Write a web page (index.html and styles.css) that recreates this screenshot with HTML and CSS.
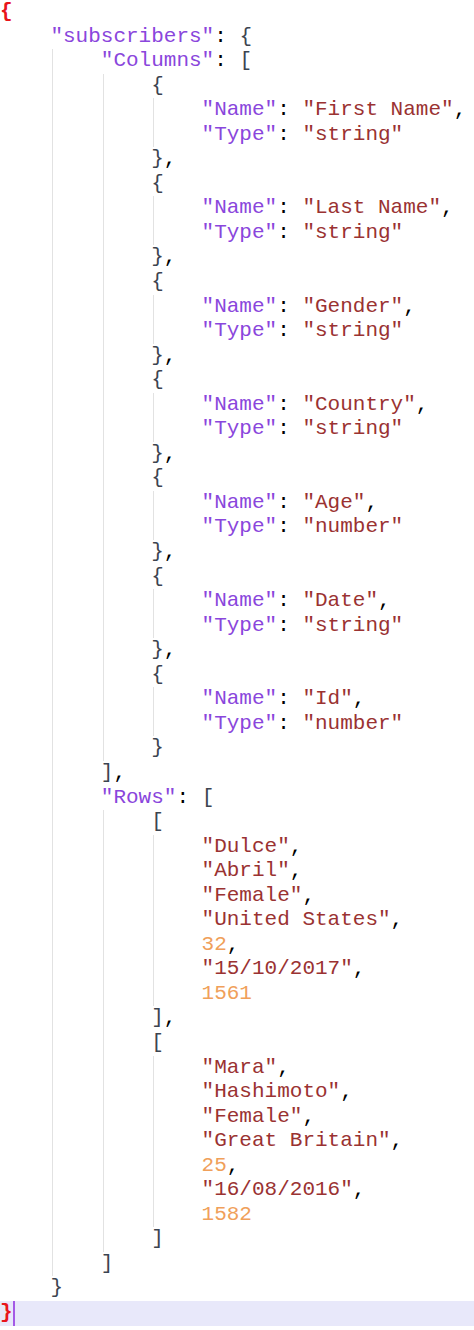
FILE: index.html
```html
<!DOCTYPE html>
<html>
<head>
<meta charset="utf-8">
<link rel="stylesheet" href="styles.css">
</head>
<body>
<div class="editor">
<div class="ln"><span class="t r">{</span></div>
<div class="ln"><span class="i"></span><span class="t"><span class="k">"subscribers"</span>: <span class="p">{</span></span></div>
<div class="ln"><span class="i"></span><span class="i g"></span><span class="t"><span class="k">"Columns"</span>: <span class="p">[</span></span></div>
<div class="ln"><span class="i"></span><span class="i g"></span><span class="i g"></span><span class="t"><span class="p">{</span></span></div>
<div class="ln"><span class="i"></span><span class="i g"></span><span class="i g"></span><span class="i g"></span><span class="t"><span class="k">"Name"</span>: <span class="s">"First Name"</span>,</span></div>
<div class="ln"><span class="i"></span><span class="i g"></span><span class="i g"></span><span class="i g"></span><span class="t"><span class="k">"Type"</span>: <span class="s">"string"</span></span></div>
<div class="ln"><span class="i"></span><span class="i g"></span><span class="i g"></span><span class="t"><span class="p">}</span>,</span></div>
<div class="ln"><span class="i"></span><span class="i g"></span><span class="i g"></span><span class="t"><span class="p">{</span></span></div>
<div class="ln"><span class="i"></span><span class="i g"></span><span class="i g"></span><span class="i g"></span><span class="t"><span class="k">"Name"</span>: <span class="s">"Last Name"</span>,</span></div>
<div class="ln"><span class="i"></span><span class="i g"></span><span class="i g"></span><span class="i g"></span><span class="t"><span class="k">"Type"</span>: <span class="s">"string"</span></span></div>
<div class="ln"><span class="i"></span><span class="i g"></span><span class="i g"></span><span class="t"><span class="p">}</span>,</span></div>
<div class="ln"><span class="i"></span><span class="i g"></span><span class="i g"></span><span class="t"><span class="p">{</span></span></div>
<div class="ln"><span class="i"></span><span class="i g"></span><span class="i g"></span><span class="i g"></span><span class="t"><span class="k">"Name"</span>: <span class="s">"Gender"</span>,</span></div>
<div class="ln"><span class="i"></span><span class="i g"></span><span class="i g"></span><span class="i g"></span><span class="t"><span class="k">"Type"</span>: <span class="s">"string"</span></span></div>
<div class="ln"><span class="i"></span><span class="i g"></span><span class="i g"></span><span class="t"><span class="p">}</span>,</span></div>
<div class="ln"><span class="i"></span><span class="i g"></span><span class="i g"></span><span class="t"><span class="p">{</span></span></div>
<div class="ln"><span class="i"></span><span class="i g"></span><span class="i g"></span><span class="i g"></span><span class="t"><span class="k">"Name"</span>: <span class="s">"Country"</span>,</span></div>
<div class="ln"><span class="i"></span><span class="i g"></span><span class="i g"></span><span class="i g"></span><span class="t"><span class="k">"Type"</span>: <span class="s">"string"</span></span></div>
<div class="ln"><span class="i"></span><span class="i g"></span><span class="i g"></span><span class="t"><span class="p">}</span>,</span></div>
<div class="ln"><span class="i"></span><span class="i g"></span><span class="i g"></span><span class="t"><span class="p">{</span></span></div>
<div class="ln"><span class="i"></span><span class="i g"></span><span class="i g"></span><span class="i g"></span><span class="t"><span class="k">"Name"</span>: <span class="s">"Age"</span>,</span></div>
<div class="ln"><span class="i"></span><span class="i g"></span><span class="i g"></span><span class="i g"></span><span class="t"><span class="k">"Type"</span>: <span class="s">"number"</span></span></div>
<div class="ln"><span class="i"></span><span class="i g"></span><span class="i g"></span><span class="t"><span class="p">}</span>,</span></div>
<div class="ln"><span class="i"></span><span class="i g"></span><span class="i g"></span><span class="t"><span class="p">{</span></span></div>
<div class="ln"><span class="i"></span><span class="i g"></span><span class="i g"></span><span class="i g"></span><span class="t"><span class="k">"Name"</span>: <span class="s">"Date"</span>,</span></div>
<div class="ln"><span class="i"></span><span class="i g"></span><span class="i g"></span><span class="i g"></span><span class="t"><span class="k">"Type"</span>: <span class="s">"string"</span></span></div>
<div class="ln"><span class="i"></span><span class="i g"></span><span class="i g"></span><span class="t"><span class="p">}</span>,</span></div>
<div class="ln"><span class="i"></span><span class="i g"></span><span class="i g"></span><span class="t"><span class="p">{</span></span></div>
<div class="ln"><span class="i"></span><span class="i g"></span><span class="i g"></span><span class="i g"></span><span class="t"><span class="k">"Name"</span>: <span class="s">"Id"</span>,</span></div>
<div class="ln"><span class="i"></span><span class="i g"></span><span class="i g"></span><span class="i g"></span><span class="t"><span class="k">"Type"</span>: <span class="s">"number"</span></span></div>
<div class="ln"><span class="i"></span><span class="i g"></span><span class="i g"></span><span class="t"><span class="p">}</span></span></div>
<div class="ln"><span class="i"></span><span class="i g"></span><span class="t"><span class="p">]</span>,</span></div>
<div class="ln"><span class="i"></span><span class="i g"></span><span class="t"><span class="k">"Rows"</span>: <span class="p">[</span></span></div>
<div class="ln"><span class="i"></span><span class="i g"></span><span class="i g"></span><span class="t"><span class="p">[</span></span></div>
<div class="ln"><span class="i"></span><span class="i g"></span><span class="i g"></span><span class="i g"></span><span class="t"><span class="s">"Dulce"</span>,</span></div>
<div class="ln"><span class="i"></span><span class="i g"></span><span class="i g"></span><span class="i g"></span><span class="t"><span class="s">"Abril"</span>,</span></div>
<div class="ln"><span class="i"></span><span class="i g"></span><span class="i g"></span><span class="i g"></span><span class="t"><span class="s">"Female"</span>,</span></div>
<div class="ln"><span class="i"></span><span class="i g"></span><span class="i g"></span><span class="i g"></span><span class="t"><span class="s">"United States"</span>,</span></div>
<div class="ln"><span class="i"></span><span class="i g"></span><span class="i g"></span><span class="i g"></span><span class="t"><span class="n">32</span>,</span></div>
<div class="ln"><span class="i"></span><span class="i g"></span><span class="i g"></span><span class="i g"></span><span class="t"><span class="s">"15/10/2017"</span>,</span></div>
<div class="ln"><span class="i"></span><span class="i g"></span><span class="i g"></span><span class="i g"></span><span class="t"><span class="n">1561</span></span></div>
<div class="ln"><span class="i"></span><span class="i g"></span><span class="i g"></span><span class="t"><span class="p">]</span>,</span></div>
<div class="ln"><span class="i"></span><span class="i g"></span><span class="i g"></span><span class="t"><span class="p">[</span></span></div>
<div class="ln"><span class="i"></span><span class="i g"></span><span class="i g"></span><span class="i g"></span><span class="t"><span class="s">"Mara"</span>,</span></div>
<div class="ln"><span class="i"></span><span class="i g"></span><span class="i g"></span><span class="i g"></span><span class="t"><span class="s">"Hashimoto"</span>,</span></div>
<div class="ln"><span class="i"></span><span class="i g"></span><span class="i g"></span><span class="i g"></span><span class="t"><span class="s">"Female"</span>,</span></div>
<div class="ln"><span class="i"></span><span class="i g"></span><span class="i g"></span><span class="i g"></span><span class="t"><span class="s">"Great Britain"</span>,</span></div>
<div class="ln"><span class="i"></span><span class="i g"></span><span class="i g"></span><span class="i g"></span><span class="t"><span class="n">25</span>,</span></div>
<div class="ln"><span class="i"></span><span class="i g"></span><span class="i g"></span><span class="i g"></span><span class="t"><span class="s">"16/08/2016"</span>,</span></div>
<div class="ln"><span class="i"></span><span class="i g"></span><span class="i g"></span><span class="i g"></span><span class="t"><span class="n">1582</span></span></div>
<div class="ln"><span class="i"></span><span class="i g"></span><span class="i g"></span><span class="t"><span class="p">]</span></span></div>
<div class="ln"><span class="i"></span><span class="i g"></span><span class="t"><span class="p">]</span></span></div>
<div class="ln"><span class="i"></span><span class="t"><span class="p">}</span></span></div>
<div class="ln active"><span class="t r">}</span><span class="caret"></span></div>
</div>
</body>
</html>
```

FILE: styles.css
```css
html, body {
  margin: 0;
  padding: 0;
  background: #ffffff;
}

.editor {
  font-family: "Liberation Mono", "Courier New", monospace;
  font-size: 21px;
  line-height: 24.55px;
  color: #000000;
  padding: 0;
}

.ln {
  display: flex;
  align-items: stretch;
  height: 24.55px;
}

.ln.active {
  background: #e8e8fa;
}

.i {
  flex: 0 0 auto;
  width: 50.4px;
}

.i.g {
  background: linear-gradient(to right, transparent 2px, #e2e2e2 2px, #e2e2e2 3px, transparent 3px);
}

.t {
  white-space: pre;
}

.k {
  color: #8a46dc;
}

.s {
  color: #9a3232;
}

.n {
  color: #f0a05a;
}

.p {
  color: #3c4450;
}

.r {
  color: #e8151b;
  font-weight: bold;
}

.caret {
  flex: 0 0 auto;
  width: 2px;
  background: #a45ae6;
}
```
